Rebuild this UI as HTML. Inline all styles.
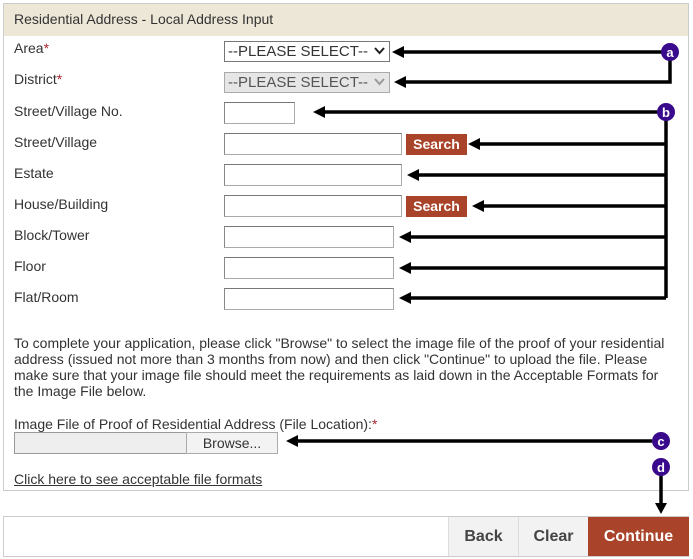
<!DOCTYPE html>
<html><head><meta charset="utf-8"><style>
*{margin:0;padding:0;box-sizing:border-box}
body{width:693px;height:559px;background:#fff;font-family:"Liberation Sans",Arial,sans-serif;font-size:14px;color:#333;position:relative;overflow:hidden}
.a{position:absolute}
.panel{left:3px;top:3px;width:686px;height:488px;border:1px solid #ccc}
.hdr{left:4px;top:4px;width:684px;height:32px;background:#ede7d8;padding:7px 10px;color:#333}
.lbl{left:14px}
.lbl i{color:#a8262f;font-style:normal}
.inp{border:1px solid #aaa;border-top-color:#777;border-left-color:#888;background:#fff;height:22px}
.sel{left:224px;width:166px;height:21px;border:1px solid #777;font-size:15px;padding:0 3px;line-height:19px;color:#333}
.sel svg{position:absolute;right:4px;top:5px}
.btn{background:#a94329;color:#fff;font-weight:bold;font-size:14px;text-align:center;line-height:21px;height:21px;width:61px;left:406px}
p.a{left:14px;top:335px;width:658px;line-height:16px;color:#333}
.foot{left:3px;top:516px;width:686px;height:41px;border:1px solid #ccc}
.fb{top:517px;height:39px;line-height:39px;text-align:center;font-weight:bold;font-size:16px;color:#444;background:#f2f2f2}
</style></head><body>
<div class="a panel"></div>
<div class="a hdr">Residential Address - Local Address Input</div>

<div class="a lbl" style="top:40px">Area<i>*</i></div>
<div class="a lbl" style="top:71px">District<i>*</i></div>
<div class="a lbl" style="top:103px">Street/Village No.</div>
<div class="a lbl" style="top:134px">Street/Village</div>
<div class="a lbl" style="top:165px">Estate</div>
<div class="a lbl" style="top:196px">House/Building</div>
<div class="a lbl" style="top:227px">Block/Tower</div>
<div class="a lbl" style="top:258px">Floor</div>
<div class="a lbl" style="top:289px">Flat/Room</div>

<div class="a sel" style="top:41px;background:#fff">--PLEASE SELECT--<svg width="11" height="8"><path d="M1 1l4.5 5L10 1" stroke="#222" stroke-width="2" fill="none"/></svg></div>
<div class="a sel" style="top:72px;background:#e6e6e6;border-color:#aaa;color:#555">--PLEASE SELECT--<svg width="11" height="8"><path d="M1 1l4.5 5L10 1" stroke="#999" stroke-width="2" fill="none"/></svg></div>

<div class="a inp" style="left:224px;top:102px;width:71px"></div>
<div class="a inp" style="left:224px;top:133px;width:178px"></div>
<div class="a inp" style="left:224px;top:164px;width:178px"></div>
<div class="a inp" style="left:224px;top:195px;width:178px"></div>
<div class="a inp" style="left:224px;top:226px;width:170px"></div>
<div class="a inp" style="left:224px;top:257px;width:170px"></div>
<div class="a inp" style="left:224px;top:288px;width:170px"></div>
<div class="a btn" style="top:134px">Search</div>
<div class="a btn" style="top:196px">Search</div>

<p class="a">To complete your application, please click "Browse" to select the image file of the proof of your residential address (issued not more than 3 months from now) and then click "Continue" to upload the file. Please make sure that your image file should meet the requirements as laid down in the Acceptable Formats for the Image File below.</p>

<div class="a lbl" style="top:416px">Image File of Proof of Residential Address (File Location):<i>*</i></div>
<div class="a" style="left:14px;top:432px;width:172px;height:22px;border:1px solid #999;border-right:none;background:#eee"></div>
<div class="a" style="left:186px;top:432px;width:92px;height:22px;border:1px solid #aaa;background:#f3f3f3;text-align:center;line-height:20px">Browse...</div>
<div class="a lbl" style="top:471px;text-decoration:underline">Click here to see acceptable file formats</div>

<div class="a foot"></div>
<div class="a fb" style="left:448px;width:70px;border-left:1px solid #ddd">Back</div>
<div class="a fb" style="left:518px;width:70px;border-left:1px solid #ddd">Clear</div>
<div class="a fb" style="left:588px;width:101px;background:#a94329;color:#fff">Continue</div>

<svg class="a" style="left:0;top:0" width="693" height="559">
<g stroke="#000" stroke-width="3.5" fill="none">
<path d="M402 52H662"/><path d="M670 60V82H404"/>
<path d="M322 112H658"/><path d="M666 118V298"/>
<path d="M478 144H666M417 175H666M482 206H666M409 237H666M409 268H666M409 298H666"/>
<path d="M296 441H652"/>
<path d="M661 475V506"/>
</g>
<g fill="#000">
<path d="M392 52l12-6v12z"/><path d="M394 82l12-6v12z"/>
<path d="M313 112l12-6v12z"/>
<path d="M468 144l12-6v12z"/><path d="M407 175l12-6v12z"/><path d="M472 206l12-6v12z"/>
<path d="M399 237l12-6v12z"/><path d="M399 268l12-6v12z"/><path d="M399 298l12-6v12z"/>
<path d="M286 441l12-6v12z"/>
<path d="M661 514l-6-11h12z"/>
</g>
<g fill="#3a0a8c">
<circle cx="670" cy="52" r="9"/><circle cx="666" cy="112" r="9"/>
<circle cx="661" cy="441" r="9"/><circle cx="661" cy="467" r="9"/>
</g>
<g fill="#fff" font-family="Liberation Sans" font-weight="bold" font-size="13" text-anchor="middle">
<text x="670" y="57">a</text><text x="666" y="117">b</text>
<text x="661" y="446">c</text><text x="661" y="472">d</text>
</g>
</svg>
</body></html>
